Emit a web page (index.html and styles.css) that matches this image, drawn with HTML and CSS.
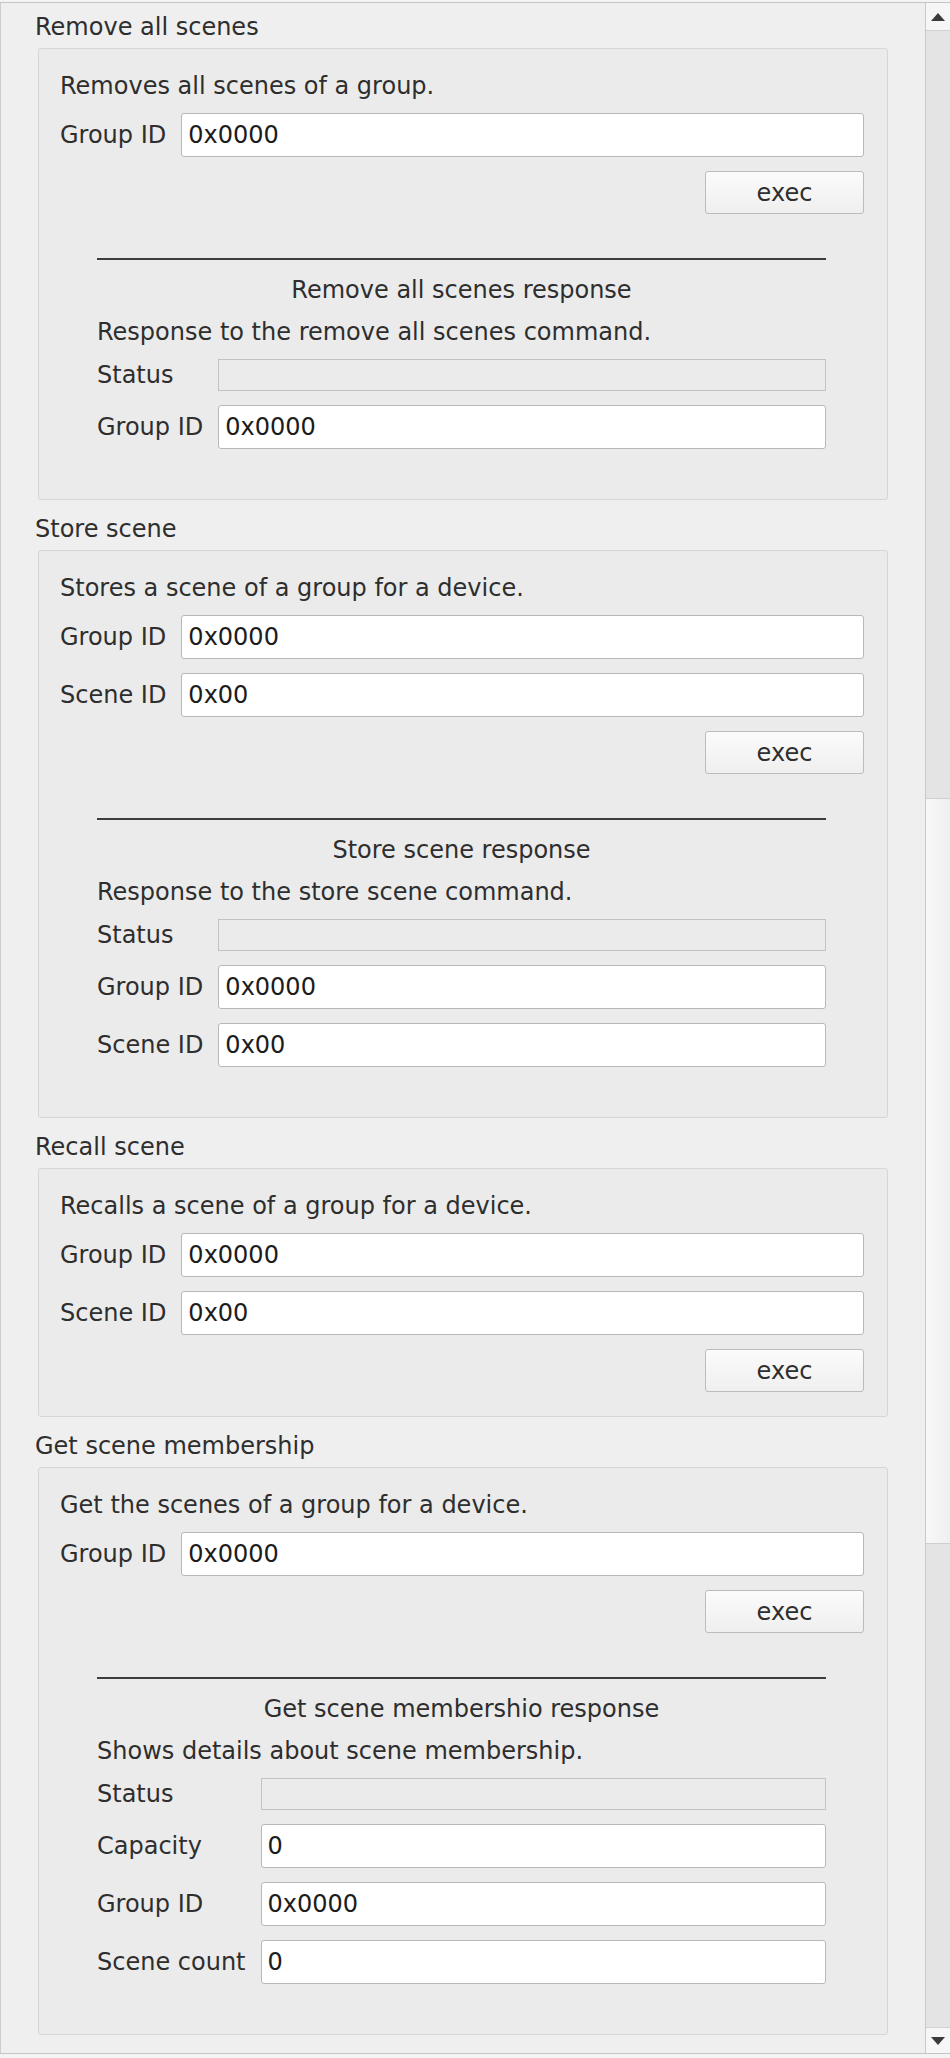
FILE: index.html
```html
<!DOCTYPE html>
<html lang="en">

<head>
  <meta charset="utf-8">
  <title>Scenes cluster</title>
  <meta name="viewport" content="width=device-width, initial-scale=1.0">
  <link rel="stylesheet" href="styles.css">
</head>

<body>
  <div class="frame">
    <div class="content">

      <!-- remove all scenes -->
      <section class="command">
        <h2 class="command-title">Remove all scenes</h2>
        <div class="group-box">
          <p class="note">Removes all scenes of a group.</p>
          <div class="form">
            <label>Group ID</label><input class="field" type="text" value="0x0000">
          </div>
          <div class="actions"><button class="btn-exec">exec</button></div>
          <div class="response">
            <hr class="line">
            <p class="response-title">Remove all scenes response</p>
            <p class="note">Response to the remove all scenes command.</p>
            <div class="form">
              <label>Status</label><div class="status"></div>
              <label>Group ID</label><input class="field" type="text" value="0x0000">
            </div>
          </div>
        </div>
      </section>

      <!-- store scene -->
      <section class="command">
        <h2 class="command-title">Store scene</h2>
        <div class="group-box">
          <p class="note">Stores a scene of a group for a device.</p>
          <div class="form">
            <label>Group ID</label><input class="field" type="text" value="0x0000">
            <label>Scene ID</label><input class="field" type="text" value="0x00">
          </div>
          <div class="actions"><button class="btn-exec">exec</button></div>
          <div class="response">
            <hr class="line">
            <p class="response-title">Store scene response</p>
            <p class="note">Response to the store scene command.</p>
            <div class="form">
              <label>Status</label><div class="status"></div>
              <label>Group ID</label><input class="field" type="text" value="0x0000">
              <label>Scene ID</label><input class="field" type="text" value="0x00">
            </div>
          </div>
        </div>
      </section>

      <!-- recall scene -->
      <section class="command">
        <h2 class="command-title">Recall scene</h2>
        <div class="group-box">
          <p class="note">Recalls a scene of a group for a device.</p>
          <div class="form">
            <label>Group ID</label><input class="field" type="text" value="0x0000">
            <label>Scene ID</label><input class="field" type="text" value="0x00">
          </div>
          <div class="actions"><button class="btn-exec">exec</button></div>
        </div>
      </section>

      <!-- get scene membership -->
      <section class="command">
        <h2 class="command-title">Get scene membership</h2>
        <div class="group-box">
          <p class="note">Get the scenes of a group for a device.</p>
          <div class="form">
            <label>Group ID</label><input class="field" type="text" value="0x0000">
          </div>
          <div class="actions"><button class="btn-exec">exec</button></div>
          <div class="response">
            <hr class="line">
            <p class="response-title">Get scene membershio response</p>
            <p class="note">Shows details about scene membership.</p>
            <div class="form">
              <label>Status</label><div class="status"></div>
              <label>Capacity</label><input class="field" type="text" value="0">
              <label>Group ID</label><input class="field" type="text" value="0x0000">
              <label>Scene count</label><input class="field" type="text" value="0">
            </div>
          </div>
        </div>
      </section>

    </div>

    <div class="scrollbar">
      <div class="arrow arrow-up">
        <svg width="14" height="8" viewBox="0 0 14 8"><polygon points="0,8 14,8 7,0" fill="#3a3a3a"/></svg>
      </div>
      <div class="track">
        <div class="track-space"></div>
        <div class="handle"></div>
      </div>
      <div class="arrow arrow-down">
        <svg width="14" height="8" viewBox="0 0 14 8"><polygon points="0,0 14,0 7,8" fill="#3a3a3a"/></svg>
      </div>
    </div>
  </div>
</body>

</html>
```

FILE: styles.css
```css
:root {
  --window-color: #efefef;
  --box-color: #ebebeb;
  --text-color: #2e2e2e;
  --border-color: #c2c2c2;
  --field-height: 44px;
}

html,
body {
  margin: 0;
  height: 100%;
}

body {
  background-color: #f4f4f4;
  font-family: "DejaVu Sans", sans-serif;
  font-size: 24px;
  color: var(--text-color);
  overflow: hidden;
}

.frame {
  display: flex;
  margin-top: 2px;
  height: 2050px;
  border-top: 1px solid #c4c4c4;
  border-bottom: 1px solid #c4c4c4;
  border-left: 1px solid #cdcdcd;
  background-color: var(--window-color);
  overflow: hidden;
}

.content {
  flex: 1;
  padding: 10px 37px 0 37px;
  overflow: hidden;
}

.command-title {
  margin: 15px 0 7px -3px;
  font-size: 24px;
  font-weight: normal;
  line-height: 28px;
}

.command:first-child .command-title {
  margin-top: 0;
}

.group-box {
  display: flex;
  flex-direction: column;
  gap: 14px;
  padding: 24px 23px 24px 21px;
  background-color: var(--box-color);
  border: 1px solid #d6d6d6;
  border-radius: 3px;
}

.note {
  margin: 0;
  line-height: 26px;
  white-space: nowrap;
}

.form {
  display: grid;
  grid-template-columns: auto 1fr;
  column-gap: 15px;
  row-gap: 14px;
  align-items: center;
}

.field {
  box-sizing: border-box;
  width: 100%;
  height: var(--field-height);
  padding: 0 6px;
  font: inherit;
  color: #1c1c1c;
  background-color: #fff;
  border: 1px solid #b8b8b8;
  border-radius: 3px;
  outline: none;
}

.status {
  height: 32px;
  box-sizing: border-box;
  background-color: var(--box-color);
  border: 1px solid var(--border-color);
}

.actions {
  display: flex;
  justify-content: flex-end;
}

.btn-exec {
  width: 159px;
  height: 43px;
  font: inherit;
  color: var(--text-color);
  background: linear-gradient(#fbfbfb, #efefef);
  border: 1px solid #bcbcbc;
  border-radius: 3px;
  padding: 0;
}

.response {
  display: flex;
  flex-direction: column;
  gap: 14px;
  margin: 0 38px 0 37px;
  padding: 30px 0 26px 0;
}

.line {
  margin: 0 0 3px 0;
  height: 2px;
  border: 0;
  background-color: #3c3c3c;
}

.response-title {
  margin: 0 0 2px 0;
  line-height: 26px;
  text-align: center;
}

.scrollbar {
  display: flex;
  flex-direction: column;
  width: 24px;
  border-left: 1px solid #c9c9c9;
  background-color: #e4e4e4;
}

.arrow {
  display: flex;
  align-items: center;
  justify-content: center;
  height: 27px;
  background-color: #f6f6f6;
}

.arrow-up {
  border-bottom: 1px solid #d2d2d2;
}

.arrow-down {
  height: 25px;
  border-top: 1px solid #d2d2d2;
}

.track {
  flex: 1;
}

.track-space {
  height: 767px;
}

.handle {
  height: 744px;
  background: linear-gradient(to right, #f8f8f8, #efefef);
  border-top: 1px solid #cfcfcf;
  border-bottom: 1px solid #cfcfcf;
}
```
